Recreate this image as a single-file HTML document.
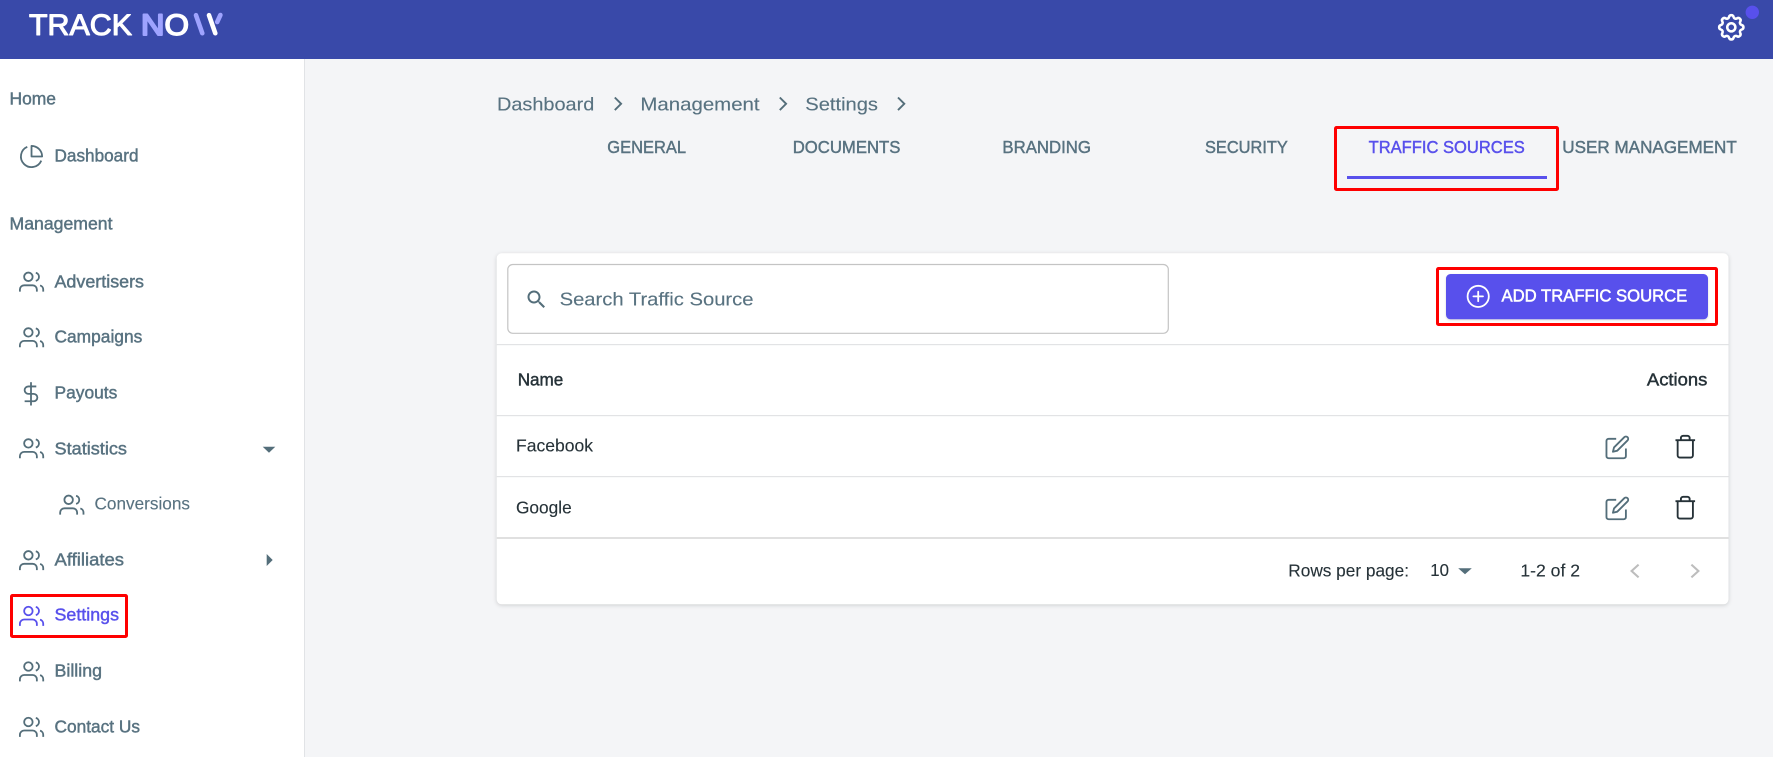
<!DOCTYPE html>
<html lang="en">
<head>
<meta charset="utf-8">
<title>Track Now - Traffic Sources</title>
<style>
html,body{margin:0;padding:0;width:1773px;height:757px;overflow:hidden;background:#f4f5f7}
svg{display:block}
text{font-family:"Liberation Sans",Arial,sans-serif;font-size:17.8px}
.m{fill:#587280;stroke:#587280;stroke-width:.45px}
.r{fill:#587280;stroke:#587280;stroke-width:.12px}
.d{fill:#263238;stroke:#263238;stroke-width:.12px}
.dm{fill:#263238;stroke:#263238;stroke-width:.45px}
.ic{fill:none;stroke:#546e7a;stroke-width:1.7;stroke-linecap:butt;stroke-linejoin:round}
.red{fill:none;stroke:#fe0000;stroke-width:3}
.chev{fill:none;stroke:#546e7a;stroke-width:1.9}
</style>
</head>
<body>
<svg width="1773" height="757" viewBox="0 0 1773 757" xmlns="http://www.w3.org/2000/svg">
<defs>
<g id="users"><path d="M17 21v-2a4 4 0 0 0-4-4H5a4 4 0 0 0-4 4v2"/><circle cx="9" cy="7" r="4"/><path d="M23 21v-2a4 4 0 0 0-3-3.87"/><path d="M16 3.13a4 4 0 0 1 0 7.75"/></g>
<g id="edit"><path d="M11 4H4a2 2 0 0 0-2 2v14a2 2 0 0 0 2 2h14a2 2 0 0 0 2-2v-7"/><path d="M18.5 2.5a2.121 2.121 0 0 1 3 3L12 15l-4 1 1-4 9.5-9.5z"/></g>
<g id="trash"><path d="M3 6h18"/><path d="M19 6v14a2 2 0 0 1-2 2H7a2 2 0 0 1-2-2V6m3 0V4a2 2 0 0 1 2-2h4a2 2 0 0 1 2 2v2"/></g>
</defs>

<!-- page -->
<rect width="1773" height="757" fill="#f4f5f7"/>

<!-- sidebar -->
<rect x="0" y="59" width="304" height="698" fill="#fff"/>
<rect x="304" y="59" width="1" height="698" fill="#e1e3e6"/>

<!-- header -->
<rect width="1773" height="59" fill="#3949a9"/>
<text x="29" y="35" textLength="103" lengthAdjust="spacingAndGlyphs" style="font-size:30px;fill:#fff;stroke:#fff;stroke-width:1.1px;stroke-linejoin:round">TRACK</text>
<text transform="translate(141 35) scale(1.08 1)" x="0" y="0" style="font-size:30px;fill:#9fa3ff;stroke:#9fa3ff;stroke-width:2px;stroke-linejoin:round">N</text>
<text transform="translate(164.5 35) scale(1.05 1)" x="0" y="0" style="font-size:30px;fill:#fff;stroke:#fff;stroke-width:1.5px">O</text>
<g fill="none" stroke-width="4.6" stroke-linecap="round">
<path d="M196 15.2L202.3 33.2" stroke="#9fa3ff"/>
<path d="M209 15.2L215.3 33.2" stroke="#fff"/>
<path d="M220.4 15L217.2 22" stroke="#9fa3ff"/>
</g>
<g transform="translate(1715.1 11.1) scale(1.35)" fill="none" stroke="#fff" stroke-width="1.9" stroke-linecap="round" stroke-linejoin="round">
<path d="M10.325 4.317c.426-1.756 2.924-1.756 3.35 0a1.724 1.724 0 002.573 1.066c1.543-.94 3.31.826 2.37 2.37a1.724 1.724 0 001.065 2.572c1.756.426 1.756 2.924 0 3.35a1.724 1.724 0 00-1.066 2.573c.94 1.543-.826 3.31-2.37 2.37a1.724 1.724 0 00-2.572 1.065c-.426 1.756-2.924 1.756-3.35 0a1.724 1.724 0 00-2.573-1.066c-1.543.94-3.31-.826-2.37-2.37a1.724 1.724 0 00-1.065-2.572c-1.756-.426-1.756-2.924 0-3.35a1.724 1.724 0 001.066-2.573c-.94-1.543.826-3.31 2.37-2.37.996.608 2.296.07 2.572-1.065z"/>
<path d="M15 12a3 3 0 11-6 0 3 3 0 016 0z"/>
</g>
<circle cx="1752.3" cy="12.3" r="6.7" fill="#5850ec"/>

<!-- sidebar items -->
<text class="m" x="9.5" y="104.6" textLength="46.5" lengthAdjust="spacingAndGlyphs">Home</text>
<g class="ic" transform="translate(18.8 143.8) scale(1.06)"><path d="M21.21 15.89A10 10 0 1 1 8 2.83"/><path d="M22 12A10 10 0 0 0 12 2v10z"/></g>
<text class="m" x="54.5" y="161.5" textLength="84" lengthAdjust="spacingAndGlyphs">Dashboard</text>
<text class="m" x="9.5" y="229.6" textLength="103" lengthAdjust="spacingAndGlyphs">Management</text>

<g class="ic" transform="translate(18.84 269.4) scale(1.06)"><use href="#users"/></g>
<text class="m" x="54.5" y="287.3" textLength="89.5" lengthAdjust="spacingAndGlyphs">Advertisers</text>
<g class="ic" transform="translate(18.84 325) scale(1.06)"><use href="#users"/></g>
<text class="m" x="54.5" y="342.3" textLength="87.8" lengthAdjust="spacingAndGlyphs">Campaigns</text>
<g class="ic" transform="translate(18.28 381.13) scale(1.06)"><path d="M12 1v22"/><path d="M17 5H9.5a3.5 3.5 0 0 0 0 7h5a3.5 3.5 0 0 1 0 7H6"/></g>
<text class="m" x="54.5" y="398.3" textLength="62.8" lengthAdjust="spacingAndGlyphs">Payouts</text>

<g class="ic" transform="translate(18.84 436) scale(1.06)"><use href="#users"/></g>
<text class="m" x="54.5" y="454.6" textLength="72.5" lengthAdjust="spacingAndGlyphs">Statistics</text>
<path d="M262.7 446.7h12.6l-6.3 6z" fill="#546e7a"/>

<g class="ic" transform="translate(59.1 492.4) scale(1.06)"><use href="#users"/></g>
<text class="r" x="94.5" y="509.6" textLength="95.5" lengthAdjust="spacingAndGlyphs">Conversions</text>

<g class="ic" transform="translate(18.84 547.9) scale(1.06)"><use href="#users"/></g>
<text class="m" x="54.5" y="565.6" textLength="69.5" lengthAdjust="spacingAndGlyphs">Affiliates</text>
<path d="M266.7 554v12l6-6z" fill="#546e7a"/>

<g class="ic" transform="translate(18.84 603.6) scale(1.06)" style="stroke:#5850ec"><use href="#users"/></g>
<text x="54.5" y="620.6" textLength="64.5" lengthAdjust="spacingAndGlyphs" style="fill:#5850ec;stroke:#5850ec;stroke-width:.45px">Settings</text>
<rect class="red" x="11.5" y="595.5" width="115" height="41" rx="1"/>

<g class="ic" transform="translate(18.84 659.1) scale(1.06)"><use href="#users"/></g>
<text class="m" x="54.5" y="676.6" textLength="47.5" lengthAdjust="spacingAndGlyphs">Billing</text>
<g class="ic" transform="translate(18.84 714.6) scale(1.06)"><use href="#users"/></g>
<text class="m" x="54.5" y="732.6" textLength="85.5" lengthAdjust="spacingAndGlyphs">Contact Us</text>

<!-- breadcrumb -->
<text class="r" x="497" y="110.6" textLength="97.3" lengthAdjust="spacingAndGlyphs" style="font-size:18.4px">Dashboard</text>
<path class="chev" d="M614.8 97.5l6.3 6.3-6.3 6.3"/>
<text class="r" x="640.4" y="110.6" textLength="119.2" lengthAdjust="spacingAndGlyphs" style="font-size:18.4px">Management</text>
<path class="chev" d="M779.8 97.5l6.3 6.3-6.3 6.3"/>
<text class="r" x="805.3" y="110.6" textLength="72.7" lengthAdjust="spacingAndGlyphs" style="font-size:18.4px">Settings</text>
<path class="chev" d="M898 97.5l6.3 6.3-6.3 6.3"/>

<!-- tabs -->
<text class="m" x="607.3" y="153.2" textLength="78.8" lengthAdjust="spacingAndGlyphs">GENERAL</text>
<text class="m" x="792.7" y="153.2" textLength="107.7" lengthAdjust="spacingAndGlyphs">DOCUMENTS</text>
<text class="m" x="1002.4" y="153.2" textLength="88.6" lengthAdjust="spacingAndGlyphs">BRANDING</text>
<text class="m" x="1205" y="153.2" textLength="82.8" lengthAdjust="spacingAndGlyphs">SECURITY</text>
<text x="1368.6" y="153.2" textLength="156.2" lengthAdjust="spacingAndGlyphs" style="fill:#5850ec;stroke:#5850ec;stroke-width:.45px">TRAFFIC SOURCES</text>
<text class="m" x="1562.3" y="153.2" textLength="174.5" lengthAdjust="spacingAndGlyphs">USER MANAGEMENT</text>
<rect x="1347" y="176" width="200" height="3" fill="#5850ec"/>
<rect class="red" x="1335.5" y="127.5" width="222" height="62" rx="1"/>

<!-- card -->
<rect x="496.7" y="253.3" width="1231.8" height="351" rx="5" fill="#fff" style="filter:drop-shadow(0 1px 2px rgba(0,0,0,.16))"/>
<rect x="507.8" y="264.5" width="660.5" height="68.8" rx="5" fill="#fff" stroke="#c4c4c4" stroke-width="1.2"/>
<path transform="translate(524.5 287.5)" fill="#546e7a" d="M15.5 14h-.79l-.28-.27C15.41 12.59 16 11.11 16 9.5 16 5.91 13.09 3 9.5 3S3 5.91 3 9.5 5.91 16 9.5 16c1.61 0 3.09-.59 4.23-1.57l.27.28v.79l5 4.99L20.49 19l-4.99-5zm-6 0C7.01 14 5 11.99 5 9.5S7.01 5 9.5 5 14 7.01 14 9.5 11.99 14 9.5 14z"/>
<text class="r" x="559.6" y="305.6" textLength="193.9" lengthAdjust="spacingAndGlyphs" style="font-size:18.4px">Search Traffic Source</text>

<!-- add button -->
<rect x="1446" y="274" width="262" height="45.3" rx="4.5" fill="#5850ec" style="filter:drop-shadow(0 1px 1px rgba(0,0,0,.15))"/>
<circle cx="1478.2" cy="296.4" r="10.6" fill="none" stroke="#fff" stroke-width="1.8"/>
<path d="M1478.2 291.6v9.6M1473.4 296.4h9.6" fill="none" stroke="#fff" stroke-width="1.8" stroke-linecap="round"/>
<text x="1501.5" y="301.6" textLength="185.8" lengthAdjust="spacingAndGlyphs" style="fill:#fff;stroke:#fff;stroke-width:.55px">ADD TRAFFIC SOURCE</text>
<rect class="red" x="1437.5" y="268.5" width="279" height="56" rx="1"/>

<!-- table -->
<rect x="496.7" y="344" width="1231.8" height="1.2" fill="#e2e3e5"/>
<text class="dm" x="517.7" y="385.6" textLength="45.6" lengthAdjust="spacingAndGlyphs">Name</text>
<text class="dm" x="1646.9" y="385.6" textLength="60.5" lengthAdjust="spacingAndGlyphs">Actions</text>
<rect x="496.7" y="415" width="1231.8" height="1.2" fill="#e2e3e5"/>
<text class="d" x="516" y="451.7" textLength="77" lengthAdjust="spacingAndGlyphs">Facebook</text>
<g class="ic" transform="translate(1604.3 434.5) scale(1.08)"><use href="#edit"/></g>
<g class="ic" transform="translate(1672.2 433.6) scale(1.09)" style="stroke:#263238"><use href="#trash"/></g>
<rect x="496.7" y="476" width="1231.8" height="1.2" fill="#e2e3e5"/>
<text class="d" x="516" y="513.3" textLength="55.7" lengthAdjust="spacingAndGlyphs">Google</text>
<g class="ic" transform="translate(1604.3 495.5) scale(1.08)"><use href="#edit"/></g>
<g class="ic" transform="translate(1672.2 494.6) scale(1.09)" style="stroke:#263238"><use href="#trash"/></g>
<rect x="496.7" y="537" width="1231.8" height="2" fill="#e0e0e0"/>

<!-- pagination -->
<text class="d" x="1288.3" y="576.7" textLength="120.7" lengthAdjust="spacingAndGlyphs">Rows per page:</text>
<text class="d" x="1430.3" y="576" textLength="18.7" lengthAdjust="spacingAndGlyphs">10</text>
<path d="M1458.2 568.3h13.6l-6.8 6z" fill="#546e7a"/>
<text class="d" x="1520.4" y="576.7" textLength="59.6" lengthAdjust="spacingAndGlyphs">1-2 of 2</text>
<path d="M1638.6 564.6l-7 6.4 7 6.4" fill="none" stroke="#bdbdbd" stroke-width="2.1"/>
<path d="M1691.4 564.6l7 6.4-7 6.4" fill="none" stroke="#bdbdbd" stroke-width="2.1"/>
</svg>
</body>
</html>
